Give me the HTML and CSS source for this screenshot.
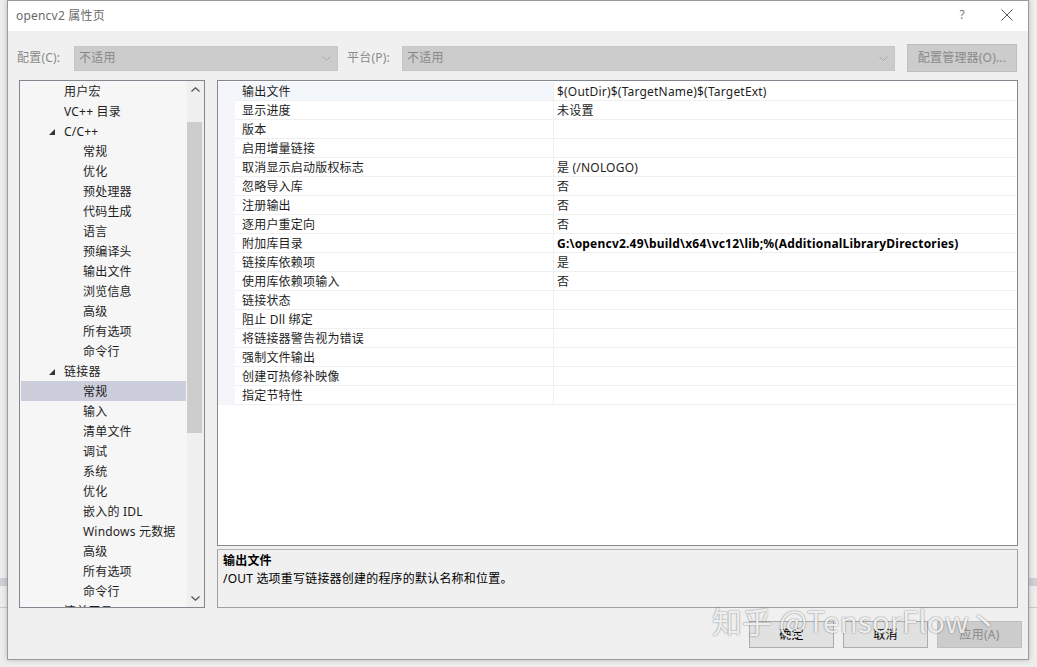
FILE: index.html
```html
<!DOCTYPE html>
<html lang="zh-CN">
<head>
<meta charset="utf-8">
<title>opencv2 属性页</title>
<link rel="stylesheet" href="styles.css">
</head>
<body>
<div class="desk">
  <div class="dialog">
    <div class="titlebar">
      <span class="title">opencv2 属性页</span>
      <span class="help">?</span>
      <svg class="close" width="12" height="12" viewBox="0 0 12 12"><path d="M0.5 0.5 L11.5 11.5 M11.5 0.5 L0.5 11.5" stroke="#555" stroke-width="1" fill="none"/></svg>
    </div>
    <div class="content">
      <div class="toolbar">
        <span class="lbl lbl1">配置(C):</span>
        <div class="combo combo1"><span>不适用</span><svg width="9" height="5" viewBox="0 0 9 5"><path d="M0.5 0.5 L4.5 4.5 L8.5 0.5" stroke="#a9a9a9" fill="none"/></svg></div>
        <span class="lbl lbl2">平台(P):</span>
        <div class="combo combo2"><span>不适用</span><svg width="9" height="5" viewBox="0 0 9 5"><path d="M0.5 0.5 L4.5 4.5 L8.5 0.5" stroke="#a9a9a9" fill="none"/></svg></div>
        <div class="btn btn-dis cfgmgr">配置管理器(O)...</div>
      </div>
      <div class="main">
        <div class="tree">
          <div class="tree-list">
            <div class="ti l1">用户宏</div>
            <div class="ti l1">VC++ 目录</div>
            <div class="ti l1"><svg class="tri" width="6" height="6" viewBox="0 0 6 6"><polygon points="6,0 6,6 0,6" fill="#333"/></svg>C/C++</div>
            <div class="ti l2">常规</div>
            <div class="ti l2">优化</div>
            <div class="ti l2">预处理器</div>
            <div class="ti l2">代码生成</div>
            <div class="ti l2">语言</div>
            <div class="ti l2">预编译头</div>
            <div class="ti l2">输出文件</div>
            <div class="ti l2">浏览信息</div>
            <div class="ti l2">高级</div>
            <div class="ti l2">所有选项</div>
            <div class="ti l2">命令行</div>
            <div class="ti l1"><svg class="tri" width="6" height="6" viewBox="0 0 6 6"><polygon points="6,0 6,6 0,6" fill="#333"/></svg>链接器</div>
            <div class="ti l2 sel">常规</div>
            <div class="ti l2">输入</div>
            <div class="ti l2">清单文件</div>
            <div class="ti l2">调试</div>
            <div class="ti l2">系统</div>
            <div class="ti l2">优化</div>
            <div class="ti l2">嵌入的 IDL</div>
            <div class="ti l2">Windows 元数据</div>
            <div class="ti l2">高级</div>
            <div class="ti l2">所有选项</div>
            <div class="ti l2">命令行</div>
            <div class="ti l1">清单工具</div>
          </div>
          <div class="vscroll">
            <div class="arrow"><svg width="9" height="5" viewBox="0 0 9 5"><path d="M0.5 4.5 L4.5 0.8 L8.5 4.5" stroke="#555" stroke-width="1.3" fill="none"/></svg></div>
            <div class="thumb"></div>
            <div class="track"></div>
            <div class="arrow"><svg width="9" height="5" viewBox="0 0 9 5"><path d="M0.5 0.5 L4.5 4.2 L8.5 0.5" stroke="#555" stroke-width="1.3" fill="none"/></svg></div>
          </div>
        </div>
        <div class="right">
          <div class="grid">
            <div class="row first"><div class="mcol"></div><div class="name">输出文件</div><div class="val">$(OutDir)$(TargetName)$(TargetExt)</div></div>
            <div class="row"><div class="mcol"></div><div class="name">显示进度</div><div class="val">未设置</div></div>
            <div class="row"><div class="mcol"></div><div class="name">版本</div><div class="val"></div></div>
            <div class="row"><div class="mcol"></div><div class="name">启用增量链接</div><div class="val"></div></div>
            <div class="row"><div class="mcol"></div><div class="name">取消显示启动版权标志</div><div class="val">是 (/NOLOGO)</div></div>
            <div class="row"><div class="mcol"></div><div class="name">忽略导入库</div><div class="val">否</div></div>
            <div class="row"><div class="mcol"></div><div class="name">注册输出</div><div class="val">否</div></div>
            <div class="row"><div class="mcol"></div><div class="name">逐用户重定向</div><div class="val">否</div></div>
            <div class="row"><div class="mcol"></div><div class="name">附加库目录</div><div class="val bold">G:\opencv2.49\build\x64\vc12\lib;%(AdditionalLibraryDirectories)</div></div>
            <div class="row"><div class="mcol"></div><div class="name">链接库依赖项</div><div class="val">是</div></div>
            <div class="row"><div class="mcol"></div><div class="name">使用库依赖项输入</div><div class="val">否</div></div>
            <div class="row"><div class="mcol"></div><div class="name">链接状态</div><div class="val"></div></div>
            <div class="row"><div class="mcol"></div><div class="name">阻止 Dll 绑定</div><div class="val"></div></div>
            <div class="row"><div class="mcol"></div><div class="name">将链接器警告视为错误</div><div class="val"></div></div>
            <div class="row"><div class="mcol"></div><div class="name">强制文件输出</div><div class="val"></div></div>
            <div class="row"><div class="mcol"></div><div class="name">创建可热修补映像</div><div class="val"></div></div>
            <div class="row"><div class="mcol"></div><div class="name">指定节特性</div><div class="val"></div></div>
          </div>
          <div class="desc">
            <div class="desc-title">输出文件</div>
            <div class="desc-text">/OUT 选项重写链接器创建的程序的默认名称和位置。</div>
          </div>
        </div>
      </div>
      <div class="buttons">
        <div class="btn">确定</div>
        <div class="btn">取消</div>
        <div class="btn btn-dis">应用(A)</div>
      </div>
    </div>
    <div class="watermark">知乎 @TensorFlow丶</div>
  </div>
</div>
</body>
</html>
```

FILE: styles.css
```css
* { box-sizing: border-box; }
html, body { margin: 0; padding: 0; }
body {
  width: 1037px;
  height: 667px;
  overflow: hidden;
  background: #ededed;
  font-family: "Noto Sans", "Noto Sans CJK SC", sans-serif;
  font-size: 12px;
  letter-spacing: 0.2px;
  color: #000;
}
.desk {
  height: 667px;
  padding-left: 7px;
  background:
    linear-gradient(to bottom, transparent 578px, #cfd0d5 578px, #cfd0d5 586px, transparent 586px, transparent 607px, #c9c9c9 607px, #c9c9c9 608px, transparent 608px);
}
.dialog {
  position: relative;
  width: 1022px;
  height: 660px;
  border: 1px solid #9a9a9a;
  background: #f0f0f0;
  box-shadow: 0 0 5px rgba(0,0,0,0.22);
  display: flex;
  flex-direction: column;
}
.titlebar {
  height: 30px;
  flex: none;
  background: #fff;
  display: flex;
  align-items: center;
  padding-left: 8px;
}
.title { color: #6a6a6a; line-height: 16px; }
.help { margin-left: auto; color: #777; font-size: 12px; line-height: 14px; margin-top: -2px; }
.close { margin-left: 36px; margin-right: 15px; margin-top: -2px; }

.content { flex: 1; display: flex; flex-direction: column; padding-right: 6px; }

.toolbar {
  display: flex;
  align-items: center;
  height: 28px;
  margin-top: 13px;
  padding-left: 9px;
}
.lbl { color: #8a8a8a; line-height: 16px; }
.lbl1 { width: 57px; }
.lbl2 { width: 55px; margin-left: 9px; }
.combo {
  height: 25px;
  background: #cccccc;
  border: 1px solid #c6c6c6;
  display: flex;
  align-items: center;
  justify-content: space-between;
  padding: 0 6px 0 4px;
  color: #878787;
  line-height: 16px;
}
.combo1 { width: 264px; }
.combo2 { width: 493px; }
.btn {
  height: 27px;
  width: 85px;
  background: #e1e1e1;
  border: 1px solid #adadad;
  display: flex;
  align-items: center;
  justify-content: center;
  line-height: 16px;
  padding-top: 1px;
  color: #000;
}
.btn-dis { background: #cccccc; border-color: #bfbfbf; color: #8a8a8a; }
.cfgmgr { width: 110px; height: 28px; margin-left: 12px; padding-top: 0; }

.main {
  display: flex;
  margin-top: 8px;
  padding-left: 11px;
  height: 528px;
}
.tree {
  width: 186px;
  height: 528px;
  border: 1px solid #828790;
  background: #f6f6f6;
  display: flex;
}
.tree-list { width: 167px; overflow: hidden; }
.ti {
  height: 20px;
  line-height: 18px;
  padding-top: 2px;
  margin: 0 1px;
  display: flex;
  align-items: center;
  white-space: nowrap;
  color: #1e1e1e;
}
.ti.l1 { padding-left: 43px; }
.ti.l2 { padding-left: 62px; }
.ti.sel { background: #cccedb; }
.tri { margin-left: -15px; margin-right: 9px; flex: none; margin-top: -1px; }

.vscroll {
  width: 17px;
  background: #f0f0f0;
  display: flex;
  flex-direction: column;
}
.arrow { height: 17px; display: flex; align-items: center; justify-content: center; flex: none; }
.thumb { margin-top: 24px; height: 311px; width: 15px; background: #cdcdcd; flex: none; }
.track { flex: 1; }

.right { margin-left: 12px; width: 801px; display: flex; flex-direction: column; }
.grid {
  height: 466px;
  border: 1px solid #828790;
  background: #fff;
  padding-top: 1px;
}
.row {
  display: grid;
  grid-template-columns: 17px 318px 1fr;
  height: 19px;
}
.mcol { background: #f4f6f9; }
.name, .val {
  border-bottom: 1px solid #f0f0f0;
  line-height: 16px;
  padding-top: 2px;
  white-space: nowrap;
  overflow: hidden;
  color: #1e1e1e;
}
.name { padding-left: 7px; }
.val { border-left: 1px solid #f0f0f0; padding-left: 3px; }
.row.first .name { background: #f3f6fb; }
.bold { font-weight: bold; color: #000; }

.desc {
  margin-top: 3px;
  flex: 1;
  border: 1px solid #a0a0a0;
  border-top-color: #b4b4b4;
  background: #f0f0f0;
  padding: 2px 5px;
}
.desc-title { font-weight: bold; line-height: 18px; }
.desc-text { line-height: 18px; }

.buttons {
  display: flex;
  justify-content: flex-end;
  gap: 9px;
  margin-top: 13px;
}

.watermark {
  position: absolute;
  left: 704px;
  top: 601px;
  font-family: "Noto Sans CJK SC", "Noto Sans", sans-serif;
  font-size: 30px;
  line-height: 36px;
  letter-spacing: 0;
  color: rgba(255,255,255,0.9);
  text-shadow: 0 0 2px rgba(0,0,0,0.35), 0 0 1px rgba(0,0,0,0.3);
  white-space: nowrap;
  pointer-events: none;
}
```
